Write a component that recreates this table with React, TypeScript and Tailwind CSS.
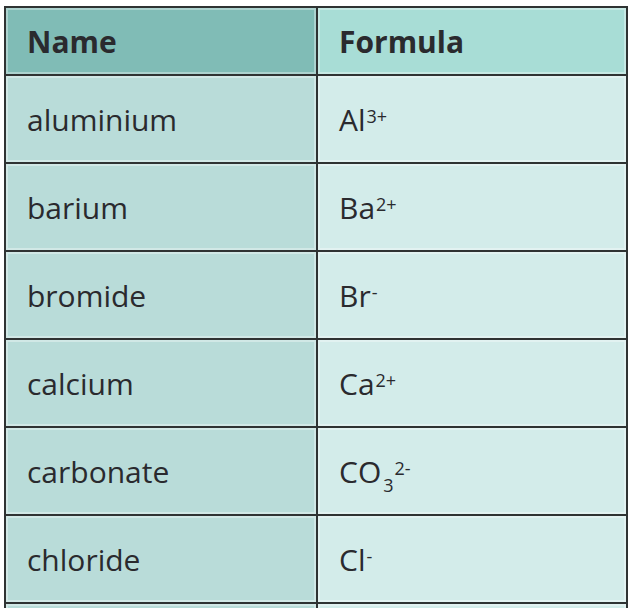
import React from 'react';

interface IonRow {
  name: string;
  symbol: string;
  sub?: string;
  charge: string;
}

const ions: IonRow[] = [
  { name: 'aluminium', symbol: 'Al', charge: '3+' },
  { name: 'barium', symbol: 'Ba', charge: '2+' },
  { name: 'bromide', symbol: 'Br', charge: '-' },
  { name: 'calcium', symbol: 'Ca', charge: '2+' },
  { name: 'carbonate', symbol: 'CO', sub: '3', charge: '2-' },
  { name: 'chloride', symbol: 'Cl', charge: '-' },
];

const cell = 'border-2 border-[#2f3333] pl-[21px] text-left align-middle shadow-[inset_0_0_0_2px_rgba(255,255,255,0.35)]';

const Formula: React.FC<{ ion: IonRow }> = ({ ion }) => (
  <span className="inline-flex items-start leading-none">
    <span>{ion.symbol}</span>
    {ion.sub && <span className="relative top-[19px] ml-[2px] text-[18px] leading-none">{ion.sub}</span>}
    <span className="relative top-[2px] ml-[1px] text-[18px] leading-none">{ion.charge}</span>
  </span>
);

export default function App() {
  return (
    <div className="h-[608px] w-[630px] overflow-hidden bg-white pl-[4px] pt-[6px]" style={{ fontFamily: '"Open Sans", "Noto Sans", sans-serif' }}>
      <table className="w-[624px] table-fixed border-collapse text-[30px] text-[#2a2a2e]">
        <colgroup>
          <col className="w-[312px]" />
          <col />
        </colgroup>
        <thead>
          <tr className="h-[68px]">
            <th className={`${cell} bg-[#80bcb6] font-bold`}>Name</th>
            <th className={`${cell} bg-[#a8ddd6] font-bold`}>Formula</th>
          </tr>
        </thead>
        <tbody>
          {ions.map((ion) => (
            <tr key={ion.name} className="h-[88px]">
              <td className={`${cell} bg-[#b9dcd9]`}>{ion.name}</td>
              <td className={`${cell} bg-[#d3ecea]`}>
                <Formula ion={ion} />
              </td>
            </tr>
          ))}
          <tr className="h-[88px]">
            <td className={`${cell} bg-[#b9dcd9]`}></td>
            <td className={`${cell} bg-[#d3ecea]`}></td>
          </tr>
        </tbody>
      </table>
    </div>
  );
}
